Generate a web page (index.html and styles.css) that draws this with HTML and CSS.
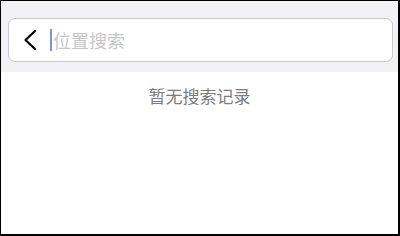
FILE: index.html
```html
<!DOCTYPE html>
<html lang="zh">
<head>
<meta charset="utf-8">
<link rel="stylesheet" href="styles.css">
</head>
<body>
<div class="frame">
  <div class="header">
    <div class="search">
      <svg class="back" width="14" height="22" viewBox="0 0 14 22"><path d="M12 2 L2.5 11 L12 20" fill="none" stroke="#000" stroke-width="2.2" stroke-linecap="round" stroke-linejoin="round"/></svg>
      <span class="cursor"></span>
      <span class="placeholder">位置搜索</span>
    </div>
  </div>
  <div class="empty">暂无搜索记录</div>
</div>
</body>
</html>
```
FILE: styles.css
```css
html, body { margin: 0; padding: 0; background: #fff; }
.frame {
  width: 400px; height: 236px; box-sizing: border-box;
  border-top: 1px solid #000; border-left: 1px solid #000;
  border-right: 2px solid #000; border-bottom: 2px solid #000;
  font-family: "Noto Sans CJK SC", "Noto Sans", sans-serif;
  background: #fff;
}
.header {
  background: #f2f1f6;
  height: 71px; box-sizing: border-box;
  padding: 17px 5px 0 7px;
}
.search {
  height: 44px; box-sizing: border-box;
  background: #fff;
  border: 1px solid #c9c9cd;
  border-radius: 7px;
  display: flex; align-items: center;
  padding-left: 14px;
}
.back { display: block; flex: none; }
.cursor {
  width: 2px; height: 22px; background: #7b92e3;
  margin-left: 13px; flex: none;
}
.placeholder {
  margin-left: 1px;
  font-size: 18px; color: #c6c6c8; line-height: 24px;
}
.empty {
  text-align: center;
  margin-top: 12px;
  font-size: 17px; line-height: 24px; color: #7c7c7e;
}
```
